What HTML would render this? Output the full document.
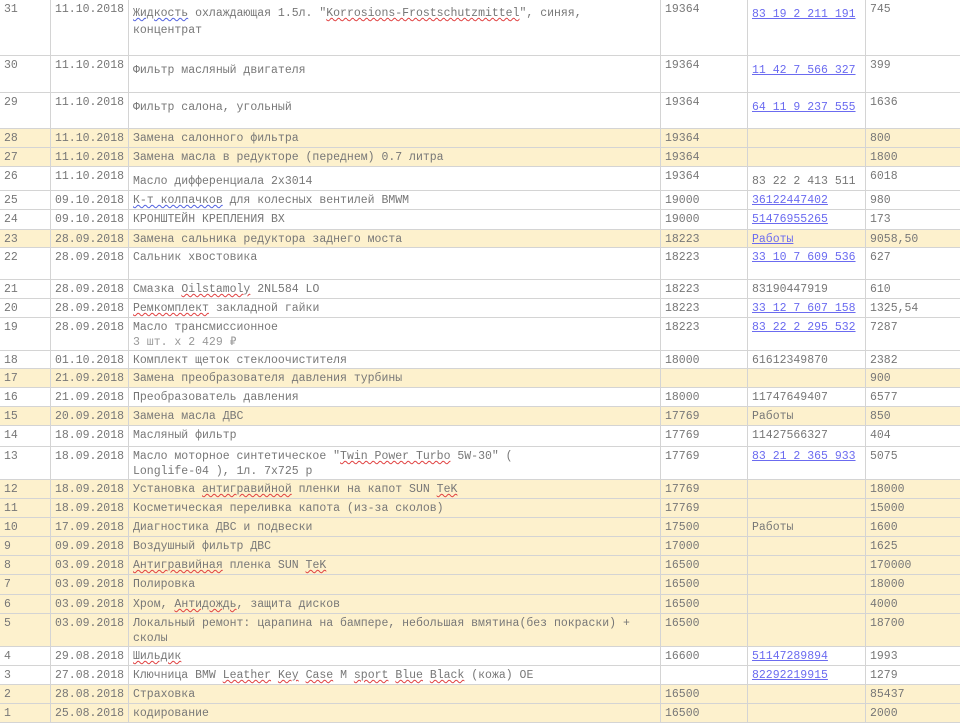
<!DOCTYPE html>
<html><head><meta charset="utf-8"><style>
html,body{margin:0;padding:0;background:#fff;width:960px;height:723px;overflow:hidden}
table{border-collapse:collapse;table-layout:fixed;width:961px;margin-left:-1px;margin-top:-1px;font-family:"Liberation Mono","DejaVu Sans Mono",monospace;font-size:11.5px;color:#777;line-height:15px}
td{border:1px solid #d4d4d4;vertical-align:top;padding:2px 4px 0 4px;overflow:hidden;white-space:nowrap}
td.d{white-space:normal}
tr.y td{background:#fdf1cd}
a{color:#6b6bf0;text-decoration:underline}
.s{text-decoration:underline wavy #e04040;text-decoration-thickness:1px}
.sb{text-decoration:underline wavy #5060e0;text-decoration-thickness:1px}
.lo{padding-top:7px}
.tall{line-height:17px;padding-top:5px}
.sub{color:#999}
</style></head><body>
<table>
<colgroup><col style="width:51px"><col style="width:78px"><col style="width:532px"><col style="width:87px"><col style="width:118px"><col style="width:95px"></colgroup>
<tr style="height:56px"><td>31</td><td>11.10.2018</td><td class="d tall"><span class="sb">Жидкость</span> охлаждающая 1.5л. "<span class="s">Korrosions-Frostschutzmittel</span>", синяя,<br>концентрат</td><td>19364</td><td class="lo"><a>83 19 2 211 191</a></td><td>745</td></tr>
<tr style="height:37px"><td>30</td><td>11.10.2018</td><td class="d lo">Фильтр масляный двигателя</td><td>19364</td><td class="lo"><a>11 42 7 566 327</a></td><td>399</td></tr>
<tr style="height:36px"><td>29</td><td>11.10.2018</td><td class="d lo">Фильтр салона, угольный</td><td>19364</td><td class="lo"><a>64 11 9 237 555</a></td><td>1636</td></tr>
<tr class="y" style="height:19px"><td>28</td><td>11.10.2018</td><td>Замена салонного фильтра</td><td>19364</td><td></td><td>800</td></tr>
<tr class="y" style="height:19px"><td>27</td><td>11.10.2018</td><td>Замена масла в редукторе (переднем) 0.7 литра</td><td>19364</td><td></td><td>1800</td></tr>
<tr style="height:24px"><td>26</td><td>11.10.2018</td><td class="lo">Масло дифференциала 2x3014</td><td>19364</td><td class="lo">83 22 2 413 511</td><td>6018</td></tr>
<tr style="height:19px"><td>25</td><td>09.10.2018</td><td><span class="sb">К-т колпачков</span> для колесных вентилей BMWM</td><td>19000</td><td><a>36122447402</a></td><td>980</td></tr>
<tr style="height:20px"><td>24</td><td>09.10.2018</td><td>КРОНШТЕЙН КРЕПЛЕНИЯ ВХ</td><td>19000</td><td><a>51476955265</a></td><td>173</td></tr>
<tr class="y" style="height:18px"><td>23</td><td>28.09.2018</td><td>Замена сальника редуктора заднего моста</td><td>18223</td><td><a>Работы</a></td><td>9058,50</td></tr>
<tr style="height:32px"><td>22</td><td>28.09.2018</td><td>Сальник хвостовика</td><td>18223</td><td><a>33 10 7 609 536</a></td><td>627</td></tr>
<tr style="height:19px"><td>21</td><td>28.09.2018</td><td>Смазка <span class="s">Oilstamoly</span> 2NL584 LO</td><td>18223</td><td>83190447919</td><td>610</td></tr>
<tr style="height:19px"><td>20</td><td>28.09.2018</td><td><span class="s">Ремкомплект</span> закладной гайки</td><td>18223</td><td><a>33 12 7 607 158</a></td><td>1325,54</td></tr>
<tr style="height:33px"><td>19</td><td>28.09.2018</td><td class="d">Масло трансмиссионное<br><span class="sub">3 шт. x 2 429 ₽</span></td><td>18223</td><td><a>83 22 2 295 532</a></td><td>7287</td></tr>
<tr style="height:18px"><td>18</td><td>01.10.2018</td><td>Комплект щеток стеклоочистителя</td><td>18000</td><td>61612349870</td><td>2382</td></tr>
<tr class="y" style="height:19px"><td>17</td><td>21.09.2018</td><td>Замена преобразователя давления турбины</td><td></td><td></td><td>900</td></tr>
<tr style="height:19px"><td>16</td><td>21.09.2018</td><td>Преобразователь давления</td><td>18000</td><td>11747649407</td><td>6577</td></tr>
<tr class="y" style="height:19px"><td>15</td><td>20.09.2018</td><td>Замена масла ДВС</td><td>17769</td><td>Работы</td><td>850</td></tr>
<tr style="height:21px"><td>14</td><td>18.09.2018</td><td>Масляный фильтр</td><td>17769</td><td>11427566327</td><td>404</td></tr>
<tr style="height:32px"><td>13</td><td>18.09.2018</td><td class="d">Масло моторное синтетическое "<span class="s">Twin Power Turbo</span> 5W-30" (<br>Longlife-04 ), 1л. 7x725 р</td><td>17769</td><td><a>83 21 2 365 933</a></td><td>5075</td></tr>
<tr class="y" style="height:19px"><td>12</td><td>18.09.2018</td><td>Установка <span class="s">антигравийной</span> пленки на капот SUN <span class="s">TeK</span></td><td>17769</td><td></td><td>18000</td></tr>
<tr class="y" style="height:19px"><td>11</td><td>18.09.2018</td><td>Косметическая переливка капота (из-за сколов)</td><td>17769</td><td></td><td>15000</td></tr>
<tr class="y" style="height:19px"><td>10</td><td>17.09.2018</td><td>Диагностика ДВС и подвески</td><td>17500</td><td>Работы</td><td>1600</td></tr>
<tr class="y" style="height:19px"><td>9</td><td>09.09.2018</td><td>Воздушный фильтр ДВС</td><td>17000</td><td></td><td>1625</td></tr>
<tr class="y" style="height:19px"><td>8</td><td>03.09.2018</td><td><span class="s">Антигравийная</span> пленка SUN <span class="s">TeK</span></td><td>16500</td><td></td><td>170000</td></tr>
<tr class="y" style="height:20px"><td>7</td><td>03.09.2018</td><td>Полировка</td><td>16500</td><td></td><td>18000</td></tr>
<tr class="y" style="height:19px"><td>6</td><td>03.09.2018</td><td>Хром, <span class="s">Антидождь</span>, защита дисков</td><td>16500</td><td></td><td>4000</td></tr>
<tr class="y" style="height:33px"><td>5</td><td>03.09.2018</td><td class="d">Локальный ремонт: царапина на бампере, небольшая вмятина(без покраски) +<br>сколы</td><td>16500</td><td></td><td>18700</td></tr>
<tr style="height:19px"><td>4</td><td>29.08.2018</td><td><span class="s">Шильдик</span></td><td>16600</td><td><a>51147289894</a></td><td>1993</td></tr>
<tr style="height:19px"><td>3</td><td>27.08.2018</td><td>Ключница BMW <span class="s">Leather</span> <span class="s">Key</span> <span class="s">Case</span> M <span class="s">sport</span> <span class="s">Blue</span> <span class="s">Black</span> (кожа) OE</td><td></td><td><a>82292219915</a></td><td>1279</td></tr>
<tr class="y" style="height:19px"><td>2</td><td>28.08.2018</td><td>Страховка</td><td>16500</td><td></td><td>85437</td></tr>
<tr class="y" style="height:19px"><td>1</td><td>25.08.2018</td><td>кодирование</td><td>16500</td><td></td><td>2000</td></tr>
</table>
</body></html>
